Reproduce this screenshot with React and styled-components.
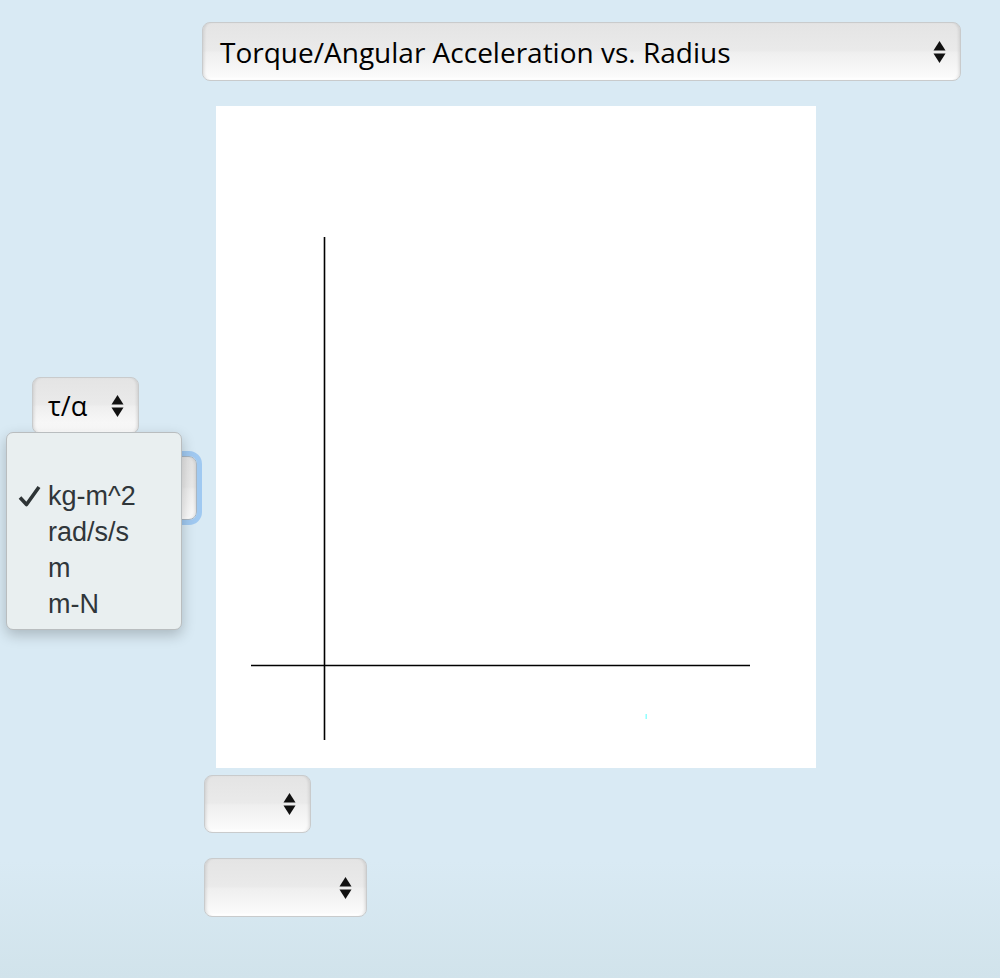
import React from "react";
import styled, { createGlobalStyle } from "styled-components";

const GlobalStyle = createGlobalStyle`
  html, body {
    margin: 0;
    padding: 0;
  }
  body {
    background: #d9eaf4;
    font-family: "Open Sans", "Liberation Sans", sans-serif;
  }
`;

const Page = styled.div`
  display: flex;
  min-height: 978px;
  background: linear-gradient(
    to bottom,
    #d9eaf4 0%,
    #d9eaf4 88%,
    #d1e3eb 100%
  );
`;

const LeftCol = styled.div`
  position: relative;
  width: 202px;
  flex-shrink: 0;
  padding: 377px 0 0 32px;
  box-sizing: border-box;
  display: flex;
  flex-direction: column;
  align-items: flex-start;
  gap: 22px;
`;

const RightCol = styled.div`
  display: flex;
  flex-direction: column;
  align-items: flex-start;
  padding-top: 22px;
`;

// glossy select box
const Select = styled.div`
  box-sizing: border-box;
  width: ${(p) => p.$w}px;
  height: ${(p) => p.$h || 58}px;
  margin-left: ${(p) => p.$ml || 0}px;
  margin-top: ${(p) => p.$mt || 0}px;
  display: flex;
  align-items: center;
  justify-content: space-between;
  padding: 0 14px 0 ${(p) => p.$pl || 16}px;
  border: 1px solid #c9cbcc;
  border-radius: 8px;
  background: linear-gradient(
    to bottom,
    #e4e4e4 0%,
    #eaeaea 48%,
    #efefef 52%,
    #fcfcfc 100%
  );
  box-shadow: inset 3px 0 3px -2px rgba(0, 0, 0, 0.14),
    inset -3px 0 3px -2px rgba(0, 0, 0, 0.14),
    inset 0 -2px 2px rgba(255, 255, 255, 0.9);
  color: #000;
  font-size: ${(p) => p.$fs || 22}px;
  ${(p) =>
    p.$focus &&
    `outline: 5px solid rgba(140, 190, 240, 0.75); outline-offset: 0; border-color: #a9b6c2;`}
`;

const Label = styled.span`
  white-space: nowrap;
  line-height: 1;
`;

const Arrows = () => (
  <svg width={13} height={24} viewBox="0 0 13 24">
    <path d="M6.5 1 L12.5 10.5 L0.5 10.5 Z" fill="#111" />
    <path d="M0.5 13.5 L12.5 13.5 L6.5 23 Z" fill="#111" />
  </svg>
);

const Menu = styled.div`
  position: absolute;
  left: 6px;
  top: 432px;
  width: 176px;
  height: 198px;
  box-sizing: border-box;
  padding-top: 45px;
  background: #e9eff0;
  border: 1px solid #b9bdbf;
  border-radius: 7px;
  box-shadow: 0 5px 14px rgba(0, 0, 0, 0.22);
  display: flex;
  flex-direction: column;
`;

const MenuItem = styled.div`
  display: flex;
  align-items: center;
  height: 36px;
  font-family: "Liberation Sans", Arial, sans-serif;
  font-size: 27px;
  color: #30363a;
`;

const CheckSlot = styled.span`
  width: 41px;
  padding-left: 11px;
  box-sizing: border-box;
  display: flex;
  align-items: center;
`;

const CheckMark = () => (
  <svg width="23" height="22" viewBox="0 0 23 22">
    <path
      d="M2 12.5 L8.5 19.5 L21 2"
      fill="none"
      stroke="#2e3436"
      strokeWidth="3.6"
      strokeLinejoin="round"
    />
  </svg>
);

const Canvas = styled.div`
  margin: 25px 0 0 14px;
  width: 600px;
  height: 662px;
  background: #fff;
`;

const units = ["kg-m^2", "rad/s/s", "m", "m-N"];

function Chart() {
  return (
    <svg width="600" height="662" viewBox="0 0 600 662">
      <line x1="108.5" y1="131" x2="108.5" y2="634" stroke="#000" strokeWidth="1.6" />
      <line x1="35" y1="559.5" x2="534" y2="559.5" stroke="#000" strokeWidth="1.6" />
      <rect x="429.5" y="608" width="1.4" height="5" fill="#8ff" />
    </svg>
  );
}

export default function App() {
  return (
    <>
      <GlobalStyle />
      <Page>
        <LeftCol>
          <Select $w={107} $h={57} $pl={15} $fs={27}>
            <Label>τ/α</Label>
            <Arrows />
          </Select>
          <Select $w={165} $h={64} $focus />
          <Menu>
            {units.map((u, i) => (
              <MenuItem key={u}>
                <CheckSlot>{i === 0 && <CheckMark />}</CheckSlot>
                {u}
              </MenuItem>
            ))}
          </Menu>
        </LeftCol>
        <RightCol>
          <Select $w={759} $h={59} $pl={17} $fs={28}>
            <Label>Torque/Angular Acceleration vs. Radius</Label>
            <Arrows />
          </Select>
          <Canvas>
            <Chart />
          </Canvas>
          <Select $w={107} $h={58} $ml={2} $mt={7}>
            <span />
            <Arrows />
          </Select>
          <Select $w={163} $h={59} $ml={2} $mt={25}>
            <span />
            <Arrows />
          </Select>
        </RightCol>
      </Page>
    </>
  );
}
